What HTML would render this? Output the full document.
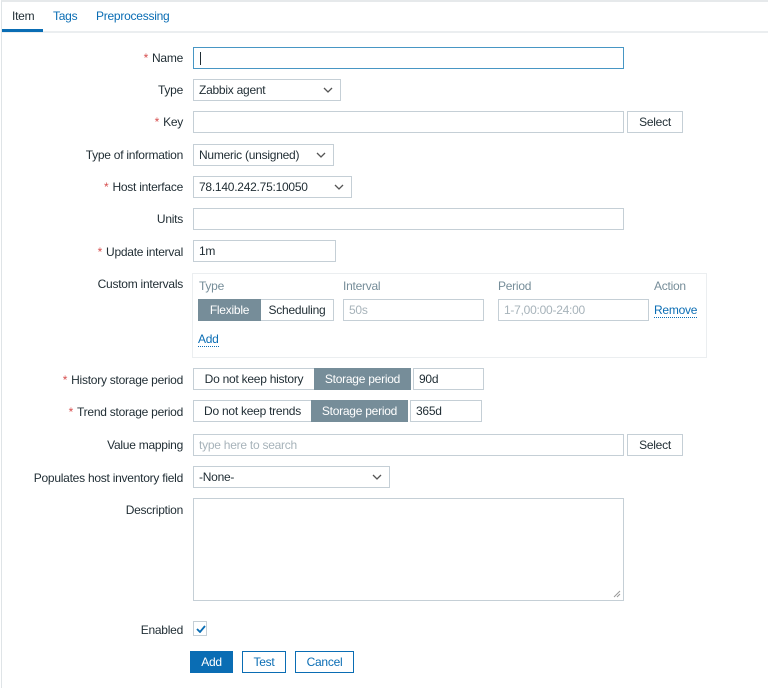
<!DOCTYPE html>
<html><head><meta charset="utf-8"><style>
*{box-sizing:border-box;margin:0;padding:0}
body{width:768px;height:688px;background:#fff;font-family:"Liberation Sans",Arial,sans-serif;font-size:12px;letter-spacing:-0.25px;color:#1f2c33;position:relative;overflow:hidden}
.frame{position:absolute;left:1px;top:0;width:767px;height:688px;border-left:1px solid #dfe4e7;border-top:2px solid #e6e9eb}
.abs{position:absolute}
.tab{position:absolute;top:9px;font-size:12px}
.lbl{position:absolute;right:585px;text-align:right;white-space:nowrap;line-height:14px}
.lbl .r{color:#d64e4e;margin-right:4px}
.in{position:absolute;border:1px solid #c5cfd6;background:#fff;height:22px;line-height:20px;padding-left:5px;white-space:nowrap}
.sel svg{position:absolute;right:7px;top:7px}
.btn{position:absolute;border:1px solid #c5cfd6;background:#fff;height:22px;line-height:20px;text-align:center}
.seg{position:absolute;height:22px;line-height:20px;text-align:center;border:1px solid #c5cfd6;white-space:nowrap}
.on{background:#768d99;color:#fff;border-color:#768d99}
.ph{color:#a7b3ba}
.link{color:#0a6db4;border-bottom:1px dotted #0a6db4;line-height:13px}
</style></head><body>
<div class="frame"></div>
<div class="abs" style="left:2px;top:31px;width:766px;height:2px;background:#ebeef0"></div>
<div class="abs" style="left:2px;top:29px;width:41px;height:3px;background:#0a6db4"></div>
<div class="tab" style="left:12px;color:#1f2c33">Item</div>
<div class="tab" style="left:53px;color:#0a6db4">Tags</div>
<div class="tab" style="left:96px;color:#0a6db4">Preprocessing</div>

<div class="lbl" style="top:51px"><span class="r">*</span>Name</div>
<div class="in" style="left:193px;top:47px;width:431px;border-color:#4796c4"><span style="display:inline-block;width:1px;height:13px;background:#1f2c33;vertical-align:middle;margin-left:1px"></span></div>

<div class="lbl" style="top:83px">Type</div>
<div class="in sel" style="left:193px;top:79px;width:148px">Zabbix agent<svg width="10" height="6"><path d="M1 1l4 4 4-4" fill="none" stroke="#555" stroke-width="1.3"/></svg></div>

<div class="lbl" style="top:115px"><span class="r">*</span>Key</div>
<div class="in" style="left:193px;top:111px;width:431px"></div>
<div class="btn" style="left:627px;top:111px;width:56px">Select</div>

<div class="lbl" style="top:148px">Type of information</div>
<div class="in sel" style="left:193px;top:144px;width:141px">Numeric (unsigned)<svg width="10" height="6"><path d="M1 1l4 4 4-4" fill="none" stroke="#555" stroke-width="1.3"/></svg></div>

<div class="lbl" style="top:180px"><span class="r">*</span>Host interface</div>
<div class="in sel" style="left:193px;top:176px;width:159px">78.140.242.75:10050<svg width="10" height="6"><path d="M1 1l4 4 4-4" fill="none" stroke="#555" stroke-width="1.3"/></svg></div>

<div class="lbl" style="top:212px">Units</div>
<div class="in" style="left:193px;top:208px;width:431px"></div>

<div class="lbl" style="top:245px"><span class="r">*</span>Update interval</div>
<div class="in" style="left:193px;top:240px;width:143px">1m</div>

<div class="lbl" style="top:277px">Custom intervals</div>
<div class="abs" style="left:192px;top:273px;width:515px;height:85px;border:1px solid #ebeef0"></div>
<div class="abs" style="left:199px;top:279px;color:#768d99">Type</div>
<div class="abs" style="left:343px;top:279px;color:#768d99">Interval</div>
<div class="abs" style="left:498px;top:279px;color:#768d99">Period</div>
<div class="abs" style="left:654px;top:279px;color:#768d99">Action</div>
<div class="seg on" style="left:198px;top:299px;width:63px">Flexible</div>
<div class="seg" style="left:261px;top:299px;width:73px;border-left:none">Scheduling</div>
<div class="in ph" style="left:343px;top:299px;width:141px">50s</div>
<div class="in ph" style="left:498px;top:299px;width:151px">1-7,00:00-24:00</div>
<div class="abs link" style="left:654px;top:304px">Remove</div>
<div class="abs link" style="left:198px;top:333px">Add</div>

<div class="lbl" style="top:373px"><span class="r">*</span>History storage period</div>
<div class="seg" style="left:193px;top:368px;width:122px">Do not keep history</div>
<div class="seg on" style="left:314px;top:368px;width:97px">Storage period</div>
<div class="in" style="left:413px;top:368px;width:71px">90d</div>

<div class="lbl" style="top:405px"><span class="r">*</span>Trend storage period</div>
<div class="seg" style="left:193px;top:400px;width:119px">Do not keep trends</div>
<div class="seg on" style="left:311px;top:400px;width:97px">Storage period</div>
<div class="in" style="left:410px;top:400px;width:72px">365d</div>

<div class="lbl" style="top:438px">Value mapping</div>
<div class="in ph" style="left:193px;top:434px;width:431px">type here to search</div>
<div class="btn" style="left:627px;top:434px;width:56px">Select</div>

<div class="lbl" style="top:471px">Populates host inventory field</div>
<div class="in sel" style="left:193px;top:466px;width:197px">-None-<svg width="10" height="6"><path d="M1 1l4 4 4-4" fill="none" stroke="#555" stroke-width="1.3"/></svg></div>

<div class="lbl" style="top:503px">Description</div>
<div class="in" style="left:193px;top:498px;width:431px;height:103px"><svg class="abs" style="right:2px;bottom:2px" width="8" height="8"><path d="M7 1L1 7M7 4L4 7" stroke="#999" stroke-width="1"/></svg></div>

<div class="lbl" style="top:623px">Enabled</div>
<div class="abs" style="left:193px;top:621px;width:14px;height:15px;border:1px solid #c5cfd6;background:#fff"><svg class="abs" style="left:2px;top:3px" width="10" height="8"><path d="M1 4l3 3 5-6" fill="none" stroke="#0a6db4" stroke-width="1.8"/></svg></div>

<div class="btn" style="left:190px;top:651px;width:43px;background:#0a6db4;border-color:#0a6db4;color:#fff">Add</div>
<div class="btn" style="left:242px;top:651px;width:44px;border-color:#0a6db4;color:#0a6db4">Test</div>
<div class="btn" style="left:295px;top:651px;width:59px;border-color:#0a6db4;color:#0a6db4">Cancel</div>
</body></html>
